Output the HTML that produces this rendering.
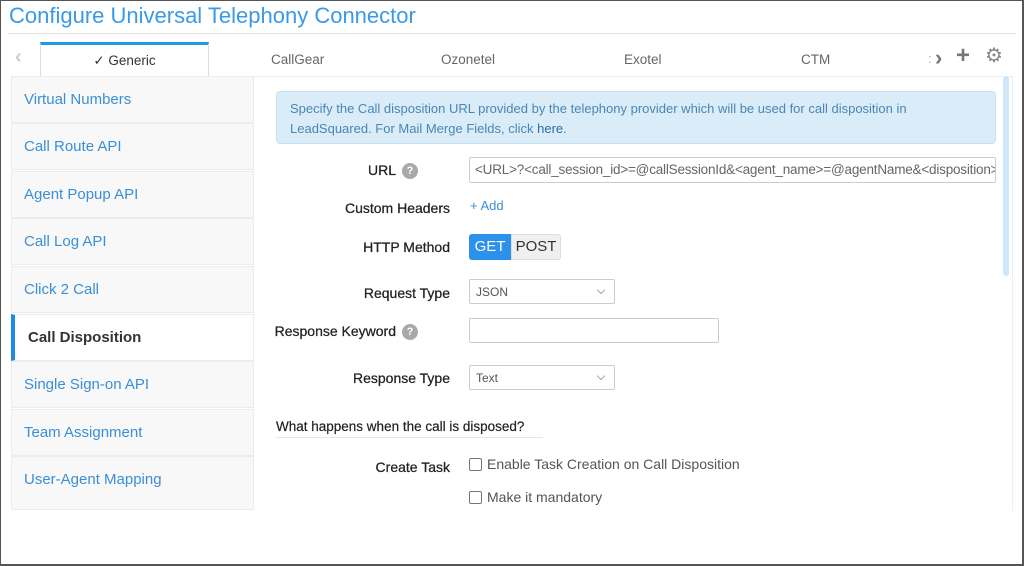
<!DOCTYPE html><html><head><style>
*{box-sizing:border-box;margin:0;padding:0}
body{width:1024px;height:566px;overflow:hidden;background:#fff;font-family:"Liberation Sans",sans-serif;position:relative}
.frame{position:absolute;left:0;top:0;width:1024px;height:566px;border:1px solid #555;border-width:1px 2px 2px 1px}
.a{position:absolute}
h1{position:absolute;left:9px;top:3px;font-weight:normal;font-size:22px;color:#3a9ae8}
.side div{position:absolute;left:11px;width:243px;height:47px;background:#f8f8f8;border:1px solid #ececec;color:#3a8fd6;font-size:15px;padding:14px 0 0 12px}
.lbl{position:absolute;font-size:14px;color:#222;text-align:right;width:200px;-webkit-text-stroke:0.25px #222}
.tab{position:absolute;top:52px;font-size:13.5px;color:#666}
.sel{position:absolute;border:1px solid #ccc;border-radius:2px;height:25px;width:146px;left:469px;font-size:12px;color:#555;padding:5px 6px}
.sel:after{content:"";position:absolute;right:10px;top:7px;width:5px;height:5px;border-right:1px solid #aaa;border-bottom:1px solid #aaa;transform:rotate(45deg)}
.q{display:inline-block;width:16px;height:16px;border-radius:50%;background:#a9a9a9;color:#fff;font-size:11px;font-weight:bold;text-align:center;line-height:16px;vertical-align:1px;margin-left:6px;-webkit-text-stroke:0}
.cb{position:absolute;left:469px;width:13px;height:13px;border:1px solid #777;border-radius:2px}
.ct{position:absolute;left:487px;font-size:14px;color:#555}
</style></head><body>
<h1>Configure Universal Telephony Connector</h1>
<div class="a" style="left:8px;top:33px;width:1008px;height:1px;background:#e4e4e4"></div>
<div class="a" style="left:15px;top:46px;color:#ccc;font-size:20px;font-weight:bold">&#8249;</div>
<div class="a" style="left:40px;top:42px;width:169px;height:35px;border:1px solid #ddd;border-top:3px solid #1a9be8;border-bottom:none;background:#fff;text-align:center;font-size:13.5px;color:#333;padding-top:8px">&#10003; Generic</div>
<div class="tab" style="left:271px">CallGear</div>
<div class="tab" style="left:441px">Ozonetel</div>
<div class="tab" style="left:624px">Exotel</div>
<div class="tab" style="left:801px">CTM</div>
<div class="a" style="left:928px;top:51px;color:#aaa;font-size:13px">:</div>
<div class="a" style="left:935px;top:45px;color:#777;font-size:22px;font-weight:bold">&#8250;</div>
<div class="a" style="left:956px;top:42px;color:#777;font-size:24px;font-weight:bold">+</div>
<div class="a" style="left:985px;top:43px;color:#888;font-size:20px">&#9881;</div>
<div class="a" style="left:11px;top:76px;width:1002px;height:1px;background:#eee"></div>
<div class="side">
<div style="top:76px">Virtual Numbers</div>
<div style="top:123px">Call Route API</div>
<div style="top:171px">Agent Popup API</div>
<div style="top:218px">Call Log API</div>
<div style="top:266px">Click 2 Call</div>
<div style="top:314px;background:#fff;color:#333;border-left:4px solid #1a8be8;padding-left:13px;font-weight:600">Call Disposition</div>
<div style="top:361px">Single Sign-on API</div>
<div style="top:409px">Team Assignment</div>
<div style="top:456px;height:54px">User-Agent Mapping</div>
</div>
<div class="a" style="left:1012px;top:76px;width:1px;height:435px;background:#eee"></div>
<div class="a" style="left:1003px;top:76px;width:6px;height:200px;background:#cfe7fb;border-radius:3px"></div>
<div class="a" style="left:276px;top:91px;width:720px;height:53px;background:#d9ecf7;border:1px solid #c6e2f2;border-radius:4px;color:#4a86b5;font-size:13px;line-height:20px;padding:7px 13px">Specify the Call disposition URL provided by the telephony provider which will be used for call disposition in LeadSquared. For Mail Merge Fields, click <span style="color:#2a6fa8">here</span>.</div>
<div class="lbl" style="left:218px;top:162px">URL<span class="q">?</span></div>
<div class="a" style="left:469px;top:157px;width:527px;height:26px;border:1px solid #ccc;border-radius:2px;font-size:13.5px;color:#666;padding:4px 5px;white-space:nowrap;overflow:hidden;letter-spacing:-0.2px">&lt;URL&gt;?&lt;call_session_id&gt;=@callSessionId&amp;&lt;agent_name&gt;=@agentName&amp;&lt;disposition&gt;</div>
<div class="lbl" style="left:250px;top:200px">Custom Headers</div>
<div class="a" style="left:470px;top:198px;color:#3a8fd6;font-size:13px">+ Add</div>
<div class="lbl" style="left:250px;top:239px">HTTP Method</div>
<div class="a" style="left:469px;top:234px;width:42px;height:26px;background:#2c91ea;border-radius:3px 0 0 3px;color:#fff;font-size:15px;padding:4px 0;text-align:center">GET</div>
<div class="a" style="left:511px;top:234px;width:50px;height:26px;background:#f0f0f0;border:1px solid #ddd;border-radius:0 3px 3px 0;color:#333;font-size:15px;padding:3px 0;text-align:center">POST</div>
<div class="lbl" style="left:250px;top:285px">Request Type</div>
<div class="sel" style="top:279px">JSON</div>
<div class="lbl" style="left:218px;top:323px">Response Keyword<span class="q">?</span></div>
<div class="a" style="left:469px;top:318px;width:250px;height:25px;border:1px solid #ccc;border-radius:2px"></div>
<div class="lbl" style="left:250px;top:370px">Response Type</div>
<div class="sel" style="top:365px">Text</div>
<div class="a" style="left:276px;top:419px;font-size:13.5px;color:#222;border-bottom:1px solid #e5e5e5;padding-bottom:3px;width:267px;-webkit-text-stroke:0.2px #222">What happens when the call is disposed?</div>
<div class="lbl" style="left:250px;top:459px">Create Task</div>
<div class="cb" style="top:458px"></div><div class="ct" style="top:456px">Enable Task Creation on Call Disposition</div>
<div class="cb" style="top:491px"></div><div class="ct" style="top:489px">Make it mandatory</div>
<div class="frame"></div>
</body></html>
